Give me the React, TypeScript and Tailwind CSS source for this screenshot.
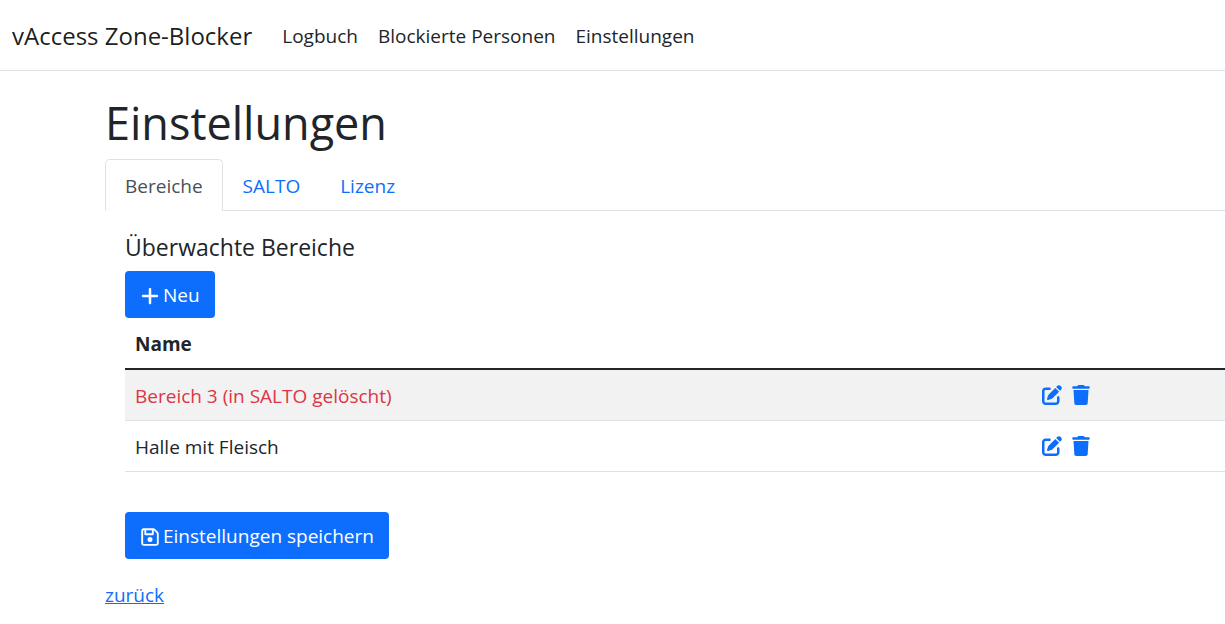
import { useState } from 'react'
import { FaPenToSquare, FaPlus, FaRegFloppyDisk, FaTrash } from 'react-icons/fa6'
import clsx from 'clsx'

const navLinks = ['Logbuch', 'Blockierte Personen', 'Einstellungen']
const tabs = ['Bereiche', 'SALTO', 'Lizenz']

const zones = [
  { id: 3, name: 'Bereich 3 (in SALTO gelöscht)', deleted: true },
  { id: 4, name: 'Halle mit Fleisch', deleted: false },
]

const primaryButton =
  'flex items-center gap-[3px] rounded bg-[#0d6efd] px-[15px] pt-[9px] pb-[7px] leading-[31px] text-white hover:bg-[#0b5ed7]'

function ZoneTable() {
  return (
    <table className="w-full table-fixed border-collapse text-left">
      <thead>
        <tr className="border-b-2 border-[#212529]">
          <th scope="col" className="px-[10px] pt-[11px] pb-[9px] font-bold">Name</th>
          <th scope="col" aria-label="Aktionen" className="w-[193px]" />
        </tr>
      </thead>
      <tbody>
        {zones.map((zone) => (
          <tr key={zone.id} className="border-b border-[#dee2e6] odd:bg-[#f2f2f2]">
            <td className={clsx('px-[10px] pt-[11px] pb-[9px]', zone.deleted && 'text-[#dc3545]')}>
              {zone.name}
            </td>
            <td className="px-[10px]">
              <div className="flex items-center gap-[10px] text-xl text-[#0d6efd]">
                <button type="button" aria-label={`${zone.name} bearbeiten`}>
                  <FaPenToSquare />
                </button>
                <button type="button" aria-label={`${zone.name} löschen`}>
                  <FaTrash className="w-[18px]" />
                </button>
              </div>
            </td>
          </tr>
        ))}
      </tbody>
    </table>
  )
}

export default function App() {
  const [activeTab, setActiveTab] = useState('Bereiche')

  return (
    <div className="min-h-screen bg-white font-['Open_Sans','Noto_Sans',sans-serif] text-[19px] leading-[30px] text-[#212529]">
      <header className="border-b border-[#dee2e6] px-3 pt-[18px] pb-4">
        <nav className="flex items-center gap-5">
          <a href="#" className="mr-[10px] text-2xl leading-9 text-black/90">vAccess Zone-Blocker</a>
          {navLinks.map((label) => (
            <a key={label} href="#">{label}</a>
          ))}
        </nav>
      </header>

      <main className="pl-[105px]">
        <h1 className="pt-[22px] pb-[6px] text-[45px] leading-[60px]">Einstellungen</h1>

        <div role="tablist" className="flex border-b border-[#dee2e6]">
          {tabs.map((tab) => (
            <button
              key={tab}
              type="button"
              role="tab"
              aria-selected={tab === activeTab}
              onClick={() => setActiveTab(tab)}
              className={clsx(
                '-mb-px rounded-t-[5px] border px-[19px] pt-[11px] pb-[9px]',
                tab === activeTab
                  ? 'border-[#dee2e6] border-b-white bg-white text-[#495057]'
                  : 'border-transparent text-[#0d6efd]'
              )}
            >
              {tab}
            </button>
          ))}
        </div>

        <section className="pt-[21px] pb-[21px] pl-5">
          <h2 className="mb-[9px] text-[23px]">Überwachte Bereiche</h2>
          <button type="button" className={primaryButton}>
            <FaPlus className="size-5" />
            Neu
          </button>
          <ZoneTable />
          <button type="button" className={clsx(primaryButton, 'mt-10')}>
            <FaRegFloppyDisk className="size-5" />
            Einstellungen speichern
          </button>
        </section>

        <a href="#" className="text-[#0d6efd] underline">zurück</a>
      </main>
    </div>
  )
}
